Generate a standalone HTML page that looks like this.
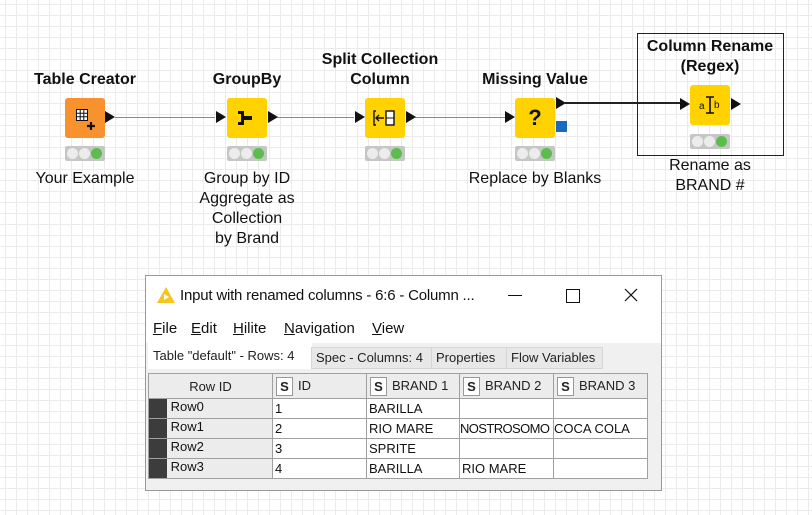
<!DOCTYPE html>
<html><head><meta charset="utf-8"><style>
body{margin:0;width:812px;height:515px;overflow:hidden;position:relative;font-family:"Liberation Sans",Arial,sans-serif;
background-color:#fff;background-image:linear-gradient(#ebebeb 1px,transparent 1px),linear-gradient(90deg,#ebebeb 1px,transparent 1px);background-size:11px 11px;background-position:5px 4px;}
.a{position:absolute}
.t{position:absolute;font-weight:bold;font-size:16px;color:#111;text-align:center;line-height:20px;white-space:nowrap}
.d{position:absolute;font-size:16px;color:#111;text-align:center;line-height:20px;white-space:nowrap}
.ic{position:absolute;width:40px;height:40px;border-radius:3px;background:#ffd200}
.st{position:absolute;width:40px;height:15px;background:#c6c6c6;border-radius:2px}
.st i{position:absolute;top:2px;width:11px;height:11px;border-radius:50%;background:#ececec}
.ar{position:absolute;width:0;height:0;border-top:6px solid transparent;border-bottom:6px solid transparent;border-left:10px solid #111}
.ln{position:absolute;height:1px;background:#8a8a8a}
.win{position:absolute;left:145px;top:275px;width:515px;height:214px;border:1px solid #999;background:#f0f0f0}
table{border-collapse:collapse;font-size:13px;position:absolute;left:2px;top:97px;table-layout:fixed;width:499px}
td{border:1px solid #a0a0a0;height:19px;padding:0 2px;background:#fff;white-space:nowrap;overflow:visible;color:#111}
th{border:1px solid #a0a0a0;height:24px;background:#ececec;font-weight:normal;text-align:left;padding:0 3px;color:#222;white-space:nowrap}
.s{display:inline-block;width:15px;height:17px;border:1px solid #999;background:#fff;text-align:center;font-weight:bold;font-size:13px;line-height:17px;margin-right:5px;vertical-align:middle}
.tab{position:absolute;top:68px;height:24px;line-height:24px;font-size:13px;color:#222;background:#e8e8e8;border:1px solid #d6d6d6;padding:0 4px;white-space:nowrap}
u{text-decoration:underline}
</style></head><body>
<div class="t" style="left:15px;top:70px;width:140px">Table Creator</div>
<div class="t" style="left:187px;top:70px;width:120px">GroupBy</div>
<div class="t" style="left:300px;top:50px;width:160px">Split Collection<br>Column</div>
<div class="t" style="left:465px;top:70px;width:140px">Missing Value</div>
<div class="t" style="left:630px;top:37px;width:160px">Column Rename<br>(Regex)</div>

<div class="a" style="left:637px;top:33px;width:145px;height:121px;border:1.5px solid #222"></div>

<div class="ln" style="left:115px;top:117px;width:100px"></div>
<div class="ln" style="left:277px;top:117px;width:77px"></div>
<div class="ln" style="left:415px;top:117px;width:90px"></div>
<div class="a" style="left:565px;top:102px;width:116px;height:2px;background:#222"></div>

<div class="ic" style="left:65px;top:98px;background:#f7922e"><svg width="40" height="40"><g stroke="#111" stroke-width="1" fill="#fff"><rect x="11.5" y="11.5" width="11" height="11"/></g><g stroke="#111" stroke-width="1"><path d="M11.5 15.2h11M11.5 18.8h11M15.2 11.5v11M18.8 11.5v11"/></g><path d="M26 24v8M22 28h8" stroke="#111" stroke-width="2.2"/></svg></div>
<div class="ar" style="left:105px;top:111px"></div>
<div class="ar" style="left:216px;top:111px"></div>
<div class="ic" style="left:227px;top:98px"><svg width="40" height="40"><path d="M11 13h6v5h8v4h-8v5h-6v-3h3v-8h-3z" fill="#111"/></svg></div>
<div class="ar" style="left:268px;top:111px"></div>
<div class="ar" style="left:355px;top:111px"></div>
<div class="ic" style="left:365px;top:98px"><svg width="40" height="40"><path d="M11 13h-2v14h2M12 20h7M14 17l-3 3 3 3" stroke="#111" stroke-width="1.4" fill="none"/><rect x="21" y="13" width="8" height="14" fill="#fff" stroke="#111" stroke-width="1.4"/><path d="M21 20h8" stroke="#111"/></svg></div>
<div class="ar" style="left:406px;top:111px"></div>
<div class="ar" style="left:505px;top:111px"></div>
<div class="ic" style="left:515px;top:98px"><div style="text-align:center;font-weight:bold;font-size:22px;line-height:40px;color:#111">?</div></div>
<div class="ar" style="left:556px;top:97px"></div>
<div class="a" style="left:556px;top:121px;width:11px;height:11px;background:#1a6bbf"></div>
<div class="ar" style="left:680px;top:98px"></div>
<div class="ic" style="left:690px;top:85px"><svg width="40" height="40"><path d="M16 12h8M20 12v16M16 28h8" stroke="#111" stroke-width="1.6" fill="none"/><text x="9" y="24" font-size="10" font-family="Liberation Sans" fill="#111">a</text><text x="24" y="23" font-size="10" font-family="Liberation Sans" fill="#111">b</text></svg></div>
<div class="ar" style="left:731px;top:98px"></div>

<div class="st" style="left:65px;top:146px"><i style="left:2px"></i><i style="left:14px"></i><i style="left:26px;background:#5bbd4c"></i></div>
<div class="st" style="left:227px;top:146px"><i style="left:2px"></i><i style="left:14px"></i><i style="left:26px;background:#5bbd4c"></i></div>
<div class="st" style="left:365px;top:146px"><i style="left:2px"></i><i style="left:14px"></i><i style="left:26px;background:#5bbd4c"></i></div>
<div class="st" style="left:515px;top:146px"><i style="left:2px"></i><i style="left:14px"></i><i style="left:26px;background:#5bbd4c"></i></div>
<div class="st" style="left:690px;top:134px"><i style="left:2px"></i><i style="left:14px"></i><i style="left:26px;background:#5bbd4c"></i></div>

<div class="d" style="left:15px;top:169px;width:140px">Your Example</div>
<div class="d" style="left:177px;top:169px;width:140px">Group by ID<br>Aggregate as<br>Collection<br>by Brand</div>
<div class="d" style="left:455px;top:169px;width:160px">Replace by Blanks</div>
<div class="d" style="left:630px;top:156px;width:160px">Rename as<br>BRAND #</div>

<div class="win">
 <div class="a" style="left:0;top:0;width:515px;height:67px;background:#fff"></div>
 <svg class="a" style="left:10px;top:10px" width="20" height="18"><path d="M10 1L19 17H1z" fill="#f7c51c"/><path d="M8 8l5 3-5 3z" fill="#fff"/></svg>
 <div class="a" style="left:34px;top:11px;font-size:15px;color:#111;letter-spacing:-0.2px">Input with renamed columns - 6:6 - Column ...</div>
 <div class="a" style="left:362px;top:19px;width:14px;height:1px;background:#111"></div>
 <div class="a" style="left:420px;top:13px;width:12px;height:12px;border:1px solid #111"></div>
 <svg class="a" style="left:478px;top:12px" width="14" height="14"><path d="M1 1L13 13M13 1L1 13" stroke="#111" stroke-width="1.2"/></svg>
 <div class="a" style="left:7px;top:44px;font-size:15px;color:#111"><u>F</u>ile</div>
 <div class="a" style="left:45px;top:44px;font-size:15px;color:#111"><u>E</u>dit</div>
 <div class="a" style="left:87px;top:44px;font-size:15px;color:#111"><u>H</u>ilite</div>
 <div class="a" style="left:138px;top:44px;font-size:15px;color:#111"><u>N</u>avigation</div>
 <div class="a" style="left:226px;top:44px;font-size:15px;color:#111"><u>V</u>iew</div>
 <div class="tab" style="left:2px;top:67px;width:154px;height:26px;background:#fff;border-color:#fff">Table "default" - Rows: 4</div>
 <div class="tab" style="left:165px;top:71px;width:111px;height:20px;line-height:20px">Spec - Columns: 4</div>
 <div class="tab" style="left:285px;top:71px;width:66px;height:20px;line-height:20px">Properties</div>
 <div class="tab" style="left:360px;top:71px;width:87px;height:20px;line-height:20px">Flow Variables</div>
 <div class="a" style="left:0;top:93px;width:515px;height:120px;background:#f0f0f0"></div>
 <table>
  <colgroup><col style="width:124px"><col style="width:94px"><col style="width:93px"><col style="width:94px"><col style="width:94px"></colgroup>
  <tr><th style="text-align:center">Row ID</th><th><span class="s">S</span>ID</th><th><span class="s">S</span>BRAND 1</th><th><span class="s">S</span>BRAND 2</th><th><span class="s">S</span>BRAND 3</th></tr>
  <tr><td style="background:#ececec;padding:0"><span style="display:inline-block;width:18px;height:19px;background:#3c3c3c;vertical-align:top"></span> Row0</td><td>1</td><td>BARILLA</td><td></td><td></td></tr>
  <tr><td style="background:#ececec;padding:0"><span style="display:inline-block;width:18px;height:19px;background:#3c3c3c;vertical-align:top"></span> Row1</td><td>2</td><td>RIO MARE</td><td style="padding:0;letter-spacing:-0.6px">NOSTROSOMO</td><td style="padding:0">COCA COLA</td></tr>
  <tr><td style="background:#ececec;padding:0"><span style="display:inline-block;width:18px;height:19px;background:#3c3c3c;vertical-align:top"></span> Row2</td><td>3</td><td>SPRITE</td><td></td><td></td></tr>
  <tr><td style="background:#ececec;padding:0"><span style="display:inline-block;width:18px;height:19px;background:#3c3c3c;vertical-align:top"></span> Row3</td><td>4</td><td>BARILLA</td><td>RIO MARE</td><td></td></tr>
 </table>
</div>
</body></html>
